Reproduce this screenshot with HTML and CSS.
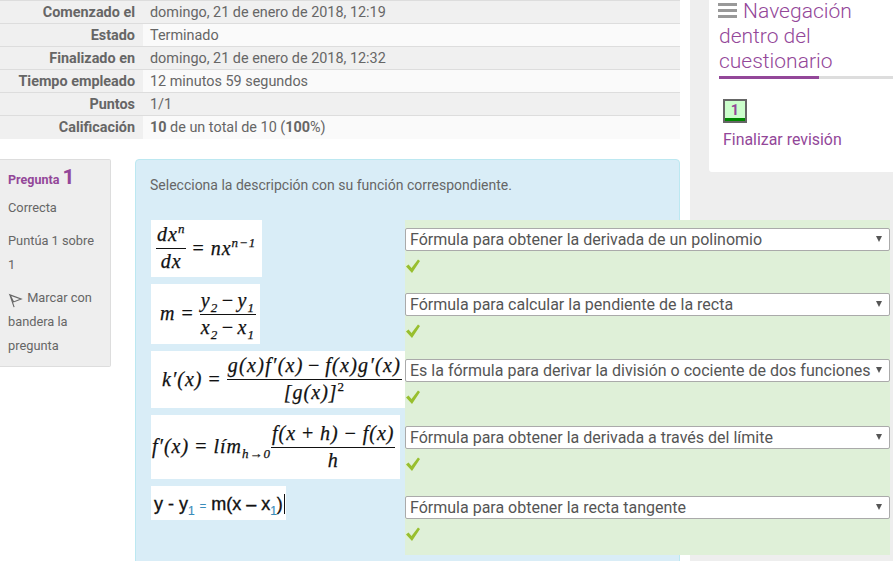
FILE: index.html
```html
<!DOCTYPE html>
<html lang="es">
<head>
<meta charset="utf-8">
<title>Revisión del cuestionario</title>
<link rel="stylesheet" href="styles.css">
</head>
<body>
<main class="main">
  <table class="summary">
    <tr><th>Comenzado el</th><td>domingo, 21 de enero de 2018, 12:19</td></tr>
    <tr><th>Estado</th><td>Terminado</td></tr>
    <tr><th>Finalizado en</th><td>domingo, 21 de enero de 2018, 12:32</td></tr>
    <tr><th>Tiempo empleado</th><td>12 minutos 59 segundos</td></tr>
    <tr><th>Puntos</th><td>1/1</td></tr>
    <tr><th>Calificación</th><td><b>10</b> de un total de 10 (<b>100</b>%)</td></tr>
  </table>
  <section class="question">
    <aside class="rail">
      <h3 class="qno">Pregunta <span>1</span></h3>
      <p>Correcta</p>
      <p>Puntúa 1 sobre 1</p>
      <p class="flagline">
        <svg class="flag" viewBox="0 0 16 16" width="15" height="15"><path d="M2 2 L14 6.5 L6 9.5 Z M2 2 L6.5 15" fill="none" stroke="#666" stroke-width="1.2"/></svg>
        Marcar con bandera la pregunta</p>
    </aside>
    <div class="formulation">
      <p class="prompt">Selecciona la descripción con su función correspondiente.</p>
      <div class="match">
        <div class="row r1">
          <div class="math m1"><span class="frac"><span class="num">dx<sup>n</sup></span><span class="den">dx</span></span><span class="eq">=</span><span>nx<sup>n−1</sup></span></div>
          <div class="answer">
            <div class="pick"><select><option>Fórmula para obtener la derivada de un polinomio</option></select></div>
            <svg class="check" viewBox="0 0 16 16" width="16" height="16"><path d="M1 8.5 L3.5 6.5 L6.5 10 L13 1.5 L15 3 L7 15 Z" fill="#98bf2e"/></svg>
          </div>
        </div>
        <div class="row r2">
          <div class="math m2"><span>m</span><span class="eq">=</span><span class="frac"><span class="num">y<sub>2</sub> − y<sub>1</sub></span><span class="den">x<sub>2</sub> − x<sub>1</sub></span></span></div>
          <div class="answer">
            <div class="pick"><select><option>Fórmula para calcular la pendiente de la recta</option></select></div>
            <svg class="check" viewBox="0 0 16 16" width="16" height="16"><path d="M1 8.5 L3.5 6.5 L6.5 10 L13 1.5 L15 3 L7 15 Z" fill="#98bf2e"/></svg>
          </div>
        </div>
        <div class="row r3">
          <div class="math m3"><span>k′(x)</span><span class="eq">=</span><span class="frac"><span class="num">g(x)f′(x) − f(x)g′(x)</span><span class="den">[g(x)]<sup class="up">2</sup></span></span></div>
          <div class="answer">
            <div class="pick"><select><option>Es la fórmula para derivar la división o cociente de dos funciones</option></select></div>
            <svg class="check" viewBox="0 0 16 16" width="16" height="16"><path d="M1 8.5 L3.5 6.5 L6.5 10 L13 1.5 L15 3 L7 15 Z" fill="#98bf2e"/></svg>
          </div>
        </div>
        <div class="row r4">
          <div class="math m4"><span>f′(x)</span><span class="eq">=</span><span>lím<sub>h→0</sub></span><span class="frac"><span class="num">f(x + h) − f(x)</span><span class="den">h</span></span></div>
          <div class="answer">
            <div class="pick"><select><option>Fórmula para obtener la derivada a través del límite</option></select></div>
            <svg class="check" viewBox="0 0 16 16" width="16" height="16"><path d="M1 8.5 L3.5 6.5 L6.5 10 L13 1.5 L15 3 L7 15 Z" fill="#98bf2e"/></svg>
          </div>
        </div>
        <div class="row r5">
          <div class="math m5">y - y<sub class="blue">1</sub> <small class="blue">=</small> m(x – x<sub class="blue">1</sub>)<span class="caret"></span></div>
          <div class="answer">
            <div class="pick"><select><option>Fórmula para obtener la recta tangente</option></select></div>
            <svg class="check" viewBox="0 0 16 16" width="16" height="16"><path d="M1 8.5 L3.5 6.5 L6.5 10 L13 1.5 L15 3 L7 15 Z" fill="#98bf2e"/></svg>
          </div>
        </div>
      </div>
    </div>
  </section>
</main>
<aside class="side">
  <div class="card">
    <h2 class="navtitle"><span class="burger"><i></i><i></i><i></i></span> Navegación dentro del cuestionario</h2>
    <div class="rule"><span></span></div>
    <a class="qbtn" href="#">1</a>
    <a class="finish" href="#">Finalizar revisión</a>
  </div>
</aside>
</body>
</html>
```
FILE: styles.css
```css
* { box-sizing: border-box; }
html, body { margin: 0; height: 561px; overflow: hidden; }
body {
  display: flex;
  width: 893px;
  background: #eee;
  font-family: Roboto, sans-serif;
  font-size: 14.4px;
  color: #666;
}
.main { width: 690px; flex: none; height: 561px; background: #fff; }

.summary { width: 680px; border-collapse: collapse; table-layout: fixed; }
.summary tr { height: 23px; }
.summary th, .summary td { padding: 1px 8px 0 7px; border-top: 1px solid #ddd; line-height: 20px; }
.summary th { width: 143px; padding-right: 8px; text-align: right; background: #f0f0f0; font-weight: 700; }
.summary td { text-align: left; background: #fafafa; }
.summary tr:nth-child(odd) td { background: #f0f0f0; }
.summary b { font-weight: 700; }

.question { display: flex; gap: 24px; margin-top: 20px; align-items: flex-start; }
.rail {
  width: 111px;
  flex: none;
  padding: 5px 8px 8px;
  background: #eee;
  border: 1px solid #ddd;
  border-left: 0;
  border-radius: 0 2px 2px 0;
  font-size: 12.8px;
  line-height: 24px;
}
.rail p { margin: 0 0 9px; }
.rail p:last-child { margin: 0; }
.qno { margin: 0 0 4px; color: #934799; font-size: 12.5px; font-weight: 700; line-height: 24px; }
.qno span { font-size: 21px; }
.flag { vertical-align: -6px; margin-right: 1px; }

.formulation {
  width: 545px;
  flex: none;
  height: 420px;
  padding: 15px 0 0 15px;
  background: #d9edf7;
  border: 1px solid #bce8f1;
  border-radius: 4px;
}
.prompt { margin: 0 0 25px -1px; line-height: 20px; font-size: 14px; }
.match { width: 739px; }
.row { display: grid; grid-template-columns: 254px 485px; }
.r1 { height: 64px; }
.r2 { height: 67px; }
.r3 { height: 64px; }
.r4 { height: 71px; }
.r5 { height: 69px; }
.answer { background: #dff0d8; display: flex; flex-direction: column; align-items: flex-start; }
.r1 .answer, .r3 .answer { padding-top: 8px; }
.r2 .answer { padding-top: 9px; }
.r4 .answer { padding-top: 11px; }
.r5 .answer { padding-top: 10px; }
.pick { position: relative; width: 485px; height: 23px; }
.pick::after {
  content: "";
  position: absolute;
  right: 8px;
  top: 8px;
  border-style: solid;
  border-width: 6px 3px 0;
  border-color: #555 transparent transparent;
}
.pick select {
  appearance: none;
  display: block;
  width: 100%;
  height: 23px;
  padding: 0 18px 0 4px;
  background: #fff;
  border: 1px solid #aaa;
  border-radius: 2px;
  font-family: Roboto, sans-serif;
  font-size: 16px;
  color: #555;
}
.check { margin-top: 7px; }

.math {
  display: flex;
  align-items: center;
  align-self: start;
  background: #fff;
  color: #111;
  font-family: "Liberation Serif", serif;
  font-style: italic;
  font-size: 20px;
  letter-spacing: 1px;
  white-space: nowrap;
  -webkit-text-stroke: 0.25px #111;
}
.m1 { width: 111px; height: 57px; padding-left: 5px; }
.m2 { width: 109px; height: 60px; padding-left: 9px; word-spacing: -3.5px; }
.m3 { width: 254px; height: 57px; padding-left: 11px; word-spacing: -3px; }
.m3 .num { letter-spacing: 1.3px; }
.m4 { width: 249px; height: 64px; padding-left: 1px; word-spacing: -1.25px; }
.m5 {
  display: block;
  width: 135px;
  height: 34px;
  padding: 1px 0 0 3px;
  font-family: "Liberation Sans", sans-serif;
  font-style: normal;
  font-size: 18px;
  letter-spacing: 0;
  line-height: 34px;
  -webkit-text-stroke: 0.35px #111;
}
.blue { color: #3a8dbb; -webkit-text-stroke: 0.2px #3a8dbb; }
.m5 sub { font-size: 12px; }
.m5 small { font-size: 11px; }
.caret { display: inline-block; width: 1px; height: 20px; margin-left: 1px; vertical-align: -4px; background: #111; }
.eq { margin: 0 6px; font-style: normal; }
.frac { display: inline-flex; flex-direction: column; align-items: center; }
.num { padding: 0 1px 1px; border-bottom: 1px solid #111; line-height: 25px; }
.den { line-height: 25px; }
sup, sub { font-size: 13px; line-height: 0; }
.up { font-style: normal; }

.side { width: 203px; flex: none; padding-left: 19px; }
.card {
  height: 173px;
  padding: 0 0 0 10px;
  background: #fff;
  border-radius: 0 0 0 3px;
}
.navtitle {
  margin: -1px 0 0;
  padding-right: 20px;
  font-size: 21px;
  font-weight: 300;
  line-height: 25px;
  color: #934799;
}
.burger { display: inline-block; width: 19px; height: 15px; margin: 0 1px 0 -1px; }
.burger i { display: block; height: 3px; margin-bottom: 3px; background: #999; }
.burger i:last-child { margin-bottom: 0; }
.rule { height: 3px; margin-top: 2px; background: #ddd; }
.rule span { display: block; width: 100px; height: 3px; background: #934799; }
.qbtn {
  display: block;
  width: 24px;
  height: 24px;
  margin: 20px 0 0 4px;
  border: 2px solid #666;
  background: #cfc;
  box-shadow: inset 0 -3px 0 #080;
  color: #934799;
  font-size: 14.4px;
  font-weight: 700;
  line-height: 19px;
  text-align: center;
  text-decoration: none;
}
.finish { display: block; margin: 7px 0 0 4px; color: #934799; font-size: 15.9px; line-height: 20px; text-decoration: none; }
```
